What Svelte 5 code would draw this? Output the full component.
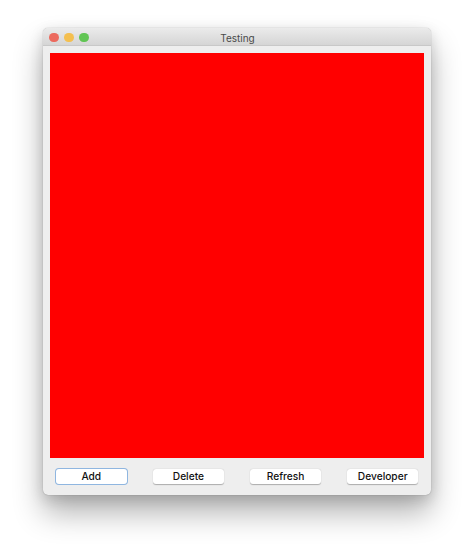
<script lang="ts">
	const buttons = ["Add", "Delete", "Refresh", "Developer"];
</script>

<div class="page">
	<div class="window">
		<div class="titlebar">
			<div class="lights">
				<span class="light red"></span>
				<span class="light yellow"></span>
				<span class="light green"></span>
			</div>
			<span class="title">Testing</span>
		</div>
		<div class="content">
			<div class="canvas"></div>
			<div class="actions">
				{#each buttons as label, i}
					<button class="btn" class:focused={i === 0}>{label}</button>
				{/each}
			</div>
		</div>
	</div>
</div>

<style>
	:global(body) {
		margin: 0;
		background: #fff;
		overflow: hidden;
	}

	.page {
		width: 474px;
		height: 552px;
		padding: 28px 0 0 43px;
		box-sizing: border-box;
		overflow: hidden;
	}

	.window {
		width: 388px;
		height: 467px;
		display: flex;
		flex-direction: column;
		border-radius: 5px;
		background: #eeeeee;
		box-shadow: 0 0 1px rgba(0, 0, 0, 0.4), 0 18px 30px rgba(0, 0, 0, 0.3), 0 4px 14px rgba(0, 0, 0, 0.14);
	}

	.titlebar {
		height: 18px;
		flex-shrink: 0;
		display: flex;
		align-items: center;
		justify-content: center;
		position: relative;
		border-radius: 5px 5px 0 0;
		background: linear-gradient(#ebebeb, #d5d5d5);
		border-bottom: 1px solid #c8c8c8;
		box-sizing: border-box;
	}

	.lights {
		position: absolute;
		left: 6px;
		top: 4.5px;
		display: flex;
		gap: 5.7px;
	}

	.light {
		width: 9.5px;
		height: 9.5px;
		border-radius: 50%;
	}

	.red { background: #ec6a5e; }
	.yellow { background: #f4bf4f; }
	.green { background: #61c554; }

	.title {
		font-family: "Inter", "Liberation Sans", sans-serif;
		font-size: 10px;
		color: #4a4a4a;
		line-height: 18px;
		padding: 2px 0 0 1px;
	}

	.content {
		flex: 1;
		display: flex;
		flex-direction: column;
		padding: 7px 7.5px 0 7px;
		min-height: 0;
	}

	.canvas {
		height: 405px;
		background: #ff0000;
		flex-shrink: 0;
	}

	.actions {
		display: flex;
		justify-content: space-between;
		margin-top: 10.5px;
		padding: 0 5px 0 5.5px;
	}

	.btn {
		width: 71.5px;
		height: 15px;
		padding: 0;
		border: none;
		border-radius: 3px;
		background: #fff;
		box-shadow: 0 0.5px 1px rgba(0, 0, 0, 0.28);
		font-family: "Inter", "Liberation Sans", sans-serif;
		font-size: 10.2px;
		font-weight: 500;
		line-height: 15px;
		color: #111;
	}

	.focused {
		box-shadow: 0 0 0 1px #8fb6e0;
	}
</style>
